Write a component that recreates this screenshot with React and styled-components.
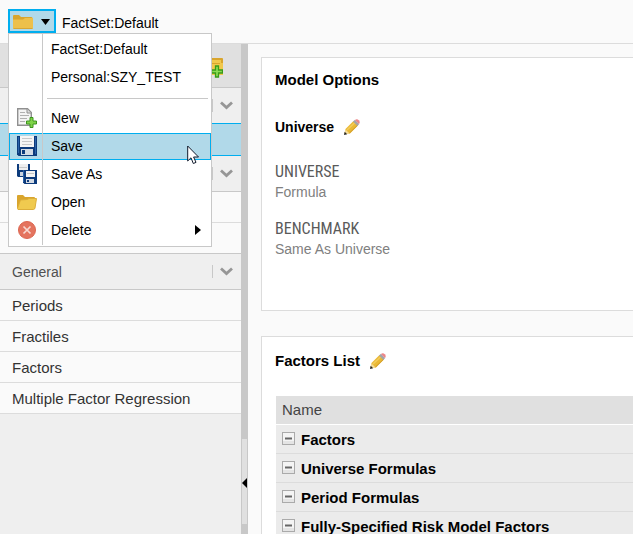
import { useState } from "react";
import styled, { createGlobalStyle } from "styled-components";

const GlobalStyle = createGlobalStyle`
  * {
    box-sizing: border-box;
  }

  body {
    margin: 0;
    background: #fafafa;
    color: #000;
    font-family: "Liberation Sans", Arial, sans-serif;
    font-size: 14px;
    line-height: 16px;
  }

  button {
    font: inherit;
    color: inherit;
    cursor: pointer;
  }

  svg {
    display: block;
    flex: none;
  }
`

const Page = styled.div`
  display: flex;
  flex-direction: column;
  height: 100vh;
  overflow: hidden;
`

const TopBar = styled.header`
  display: flex;
  align-items: center;
  flex: none;
  height: 44px;
  padding: 0 8px 2px;
  border-bottom: 1px solid #dcdcdc;
`

const CurrentProfile = styled.span`
  padding-top: 4px;
`

const MenuHolder = styled.div`
  position: relative;
  margin-right: 6px;
`

const MenuToggle = styled.button`
  display: flex;
  align-items: center;
  justify-content: space-between;
  width: 48px;
  height: 24px;
  padding: 2px 4px 0 3px;
  background: #b1d9e9;
  border: 2px solid #00aeef;
`

const Menu = styled.div`
  position: absolute;
  z-index: 5;
  top: 100%;
  left: 0;
  display: flex;
  flex-direction: column;
  gap: 1px;
  width: 204px;
  padding: 2px 0;
  background: #fff;
  border: 1px solid #c8c8c8;

  &::before {
    content: "";
    position: absolute;
    top: 0;
    bottom: 1px;
    left: 33px;
    width: 1px;
    background: #c8c8c8;
  }
`

const MenuItem = styled.button`
  display: flex;
  align-items: center;
  height: 27px;
  padding: 0 9px 0 7px;
  text-align: left;
  background: ${({ $active }) => ($active ? "#b1d9e9" : "transparent")};
  border: 1px solid ${({ $active }) => ($active ? "#00aeef" : "transparent")};
`

const MenuIcon = styled.span`
  display: flex;
  justify-content: center;
  width: 20px;
  margin-right: 14px;
`

const MenuLabel = styled.span`
  flex: 1;
`

const MenuDivider = styled.hr`
  width: 161px;
  height: 1px;
  margin: 6px 3px 5px auto;
  background: #c8c8c8;
  border: 0;
`

const Pointer = styled.span`
  position: absolute;
  z-index: 6;
  top: 136px;
  left: 179px;
  pointer-events: none;
`

const Body = styled.div`
  display: flex;
  flex: 1;
  min-height: 0;
`

const Sidebar = styled.nav`
  flex: none;
  width: 241px;
  background: #efefef;
`

const SideTools = styled.div`
  display: flex;
  align-items: center;
  justify-content: flex-end;
  height: 44px;
  padding: 4px 18px 0;
  background: #e0e0e0;
`

const SideHeader = styled.div`
  display: flex;
  align-items: center;
  justify-content: space-between;
  height: 37px;
  margin-top: -1px;
  padding: 0 8px 0 12px;
  color: #505050;
  background: #efefef;
  border: solid #c8c8c8;
  border-width: 1px 0;
`

const CollapseButton = styled.button`
  display: flex;
  margin-left: auto;
  padding: 2px 0 2px 7px;
  background: none;
  border: 0;
  border-left: 1px solid #c8c8c8;
`

const SideLink = styled.a`
  display: flex;
  align-items: center;
  height: ${({ $active }) => ($active ? "33px" : "31px")};
  margin-top: ${({ $active }) => ($active ? "-1px" : "0")};
  padding: 1px 12px 0;
  position: ${({ $active }) => ($active ? "relative" : "static")};
  font-size: 15px;
  color: #333;
  text-decoration: none;
  background: ${({ $active }) => ($active ? "#b1d9e9" : "#fafafa")};
  border-style: solid;
  border-color: ${({ $active }) => ($active ? "#00aeef" : "#dcdcdc")};
  border-width: ${({ $active }) => ($active ? "1px 0" : "0 0 1px")};
`

const Splitter = styled.div`
  display: flex;
  flex-direction: column;
  justify-content: flex-end;
  flex: none;
  width: 7px;
  padding: 0 1px 10px;
  background: #c8c8c8;
`

const SplitterHandle = styled.button`
  display: flex;
  align-items: center;
  justify-content: center;
  height: 85px;
  padding: 2px 0 0;
  background: #e0e0e0;
  border: 0;
`

const Content = styled.main`
  display: flex;
  flex-direction: column;
  flex: 1;
  gap: 25px;
  min-width: 0;
  padding: 13px 0 0 13px;
  overflow: hidden;
`

const Panel = styled.section`
  flex: none;
  min-height: 254px;
  padding: 13px 0 0 13px;
  background: #fff;
  border: 1px solid #dcdcdc;
  border-right: 0;
`

const PanelTitle = styled.h2`
  display: flex;
  align-items: center;
  min-height: 18px;
  margin: 0;
  font-size: 15px;
`

const SubTitle = styled.h3`
  display: flex;
  align-items: center;
  height: 18px;
  margin: 29px 0 24px;
  font-size: 14px;
`

const EditButton = styled.button`
  display: flex;
  margin-left: 10px;
  padding: 3px 0;
  background: none;
  border: 0;
`

const Options = styled.dl`
  margin: 0;
  color: #808080;

  dt {
    font-family: "Liberation Sans Narrow", "Roboto Condensed", "Open Sans Condensed", sans-serif;
    font-size: 16px;
    line-height: 24px;
    color: #5a5a5a;
  }

  dd {
    margin: 0 0 17px;
  }
`

const Table = styled.table`
  width: calc(100% - 1px);
  margin: 24px 0 0 1px;
  border-collapse: collapse;
  font-size: 15px;
  text-align: left;

  th {
    height: 28px;
    padding: 0 6px;
    font-weight: 400;
    color: #444;
    background: #e0e0e0;
    border-bottom: 1px solid #fff;
  }

  td {
    height: 29px;
    padding: 0 6px;
    font-weight: 700;
    background: #ebebeb;
    border-bottom: 1px solid #dcdcdc;
  }
`

const GroupCell = styled.div`
  display: flex;
  align-items: center;
  gap: 6px;
`

const GroupName = styled.span`
  padding-top: 2px;
`

const ToggleButton = styled.button`
  display: flex;
  padding: 0;
  background: none;
  border: 0;
`

const FolderIcon = () => (
  <svg width="20" height="15" viewBox="0 0 20 15">
    <path d="M0 2 Q0 1 1 1 H6 L8 3 H18 Q19.500 3 19.500 4 V14 H0Z" fill="#d9a52d" />
    <path d="M0 5.500 H10 L12 4 H20 V14 Q20 15 19 15 H1 Q0 15 0 14Z" fill="#edc04b" />
    <path d="M0.500 14.500 H19.500" stroke="#d8a634" />
  </svg>
)

const OpenFolderIcon = () => (
  <svg width="20" height="16" viewBox="0 0 20 16">
    <path d="M0 2 Q0 1 1 1 H6 L8 3 H17 Q18 3 18 4 V14 H0Z" fill="#d9a52d" />
    <path d="M3.500 6 L10 5.500 L12 4.500 H19.500 L18 14 Q17.500 15.500 16.500 15.500 H1 Q0.300 15 0.600 14Z" fill="#f0ca4f" stroke="#dcae3a" />
  </svg>
)

const AddFolderIcon = () => (
  <svg width="20" height="20" viewBox="0 0 20 20">
    <path d="M0 1 Q0 0 1 0 H19 Q20 0 20 1 V17 H0Z" fill="#d9a52d" />
    <path d="M1 2 H18 V5 H20 V17 H1Z" fill="#f1c84c" />
    <path d="M1 5.500 H17" stroke="#d9a52d" />
    <path d="M12.500 8 H15.500 V12 H19.500 V15 H15.500 V19 H12.500 V15 H8.500 V12 H12.500Z" fill="#8bdc54" stroke="#389b18" strokeWidth="1.300" />
  </svg>
)

const NewIcon = () => (
  <svg width="20" height="20" viewBox="0 0 20 20">
    <path d="M0.700 0.700 H10.500 L14.300 4.500 V17.300 H0.700Z" fill="#f4f4f4" stroke="#909090" strokeWidth="1.400" />
    <path d="M10 1 V5 H14" fill="#ddd" stroke="#909090" />
    <path d="M3 4.500 H8 M3 7.500 H12 M3 10.500 H10 M3 13.500 H8" stroke="#b0b0b0" />
    <path d="M13 9.500 H16 V13 H19.500 V16 H16 V19.500 H13 V16 H9.500 V13 H13Z" fill="#7ed348" stroke="#3c941e" />
  </svg>
)

const SaveIcon = () => (
  <svg width="20" height="20" viewBox="0 0 20 20">
    <path d="M0 0 H20 V20 H1.500 L0 18.500Z" fill="#0d3b7c" />
    <path d="M1.500 1 V17 M18.500 1 V18" stroke="#2a62a8" />
    <path d="M3 0 H17 V11 H3Z" fill="#f5f5f5" />
    <path d="M5 2.500 H15 M5 5.500 H15 M5 8.500 H15" stroke="#c8c8c8" />
    <path d="M4 13 H16 V19 H4Z" fill="#d3dae3" />
    <path d="M5 14 H8 V18 H5Z" fill="#0d3b7c" />
  </svg>
)

const SaveAsIcon = () => (
  <svg width="20" height="20" viewBox="0 0 20 20">
    <path d="M0 0 H13 V13 H1 L0 12Z" fill="#0d3b7c" />
    <path d="M2 0 H11 V6 H2Z" fill="#eee" />
    <path d="M2 3.500 H10" stroke="#c8c8c8" />
    <path d="M3 8 H7 V12 H3Z" fill="#cdd5df" />
    <path d="M6 6 H20 V20 H7.500 L6 18.500Z" fill="#0d3b7c" />
    <path d="M6.500 6 V18" stroke="#2a62a8" />
    <path d="M9 7 H18 V13 H9Z" fill="#f3f3f3" />
    <path d="M10 9.500 H17" stroke="#c4c4c4" />
    <path d="M9 15 H17 V19 H9Z" fill="#d3dae3" />
    <path d="M10 16 H12 V18 H10Z" fill="#0d3b7c" />
  </svg>
)

const DeleteIcon = () => (
  <svg width="18" height="18" viewBox="0 0 18 18">
    <circle cx="9" cy="9" r="8.500" fill="#e4745f" stroke="#dc6650" />
    <path d="M5.500 5.500 L12.500 12.500 M12.500 5.500 L5.500 12.500" stroke="#f8d9d2" strokeWidth="1.700" />
  </svg>
)

const PencilIcon = () => (
  <svg width="16" height="16" viewBox="0 0 16 16">
    <path d="M0.500 15 L1.500 10 L9.500 2 L14 6.500 L6 14.500Z" fill="#eab935" />
    <path d="M3 11 L11 3.500" stroke="#f3cc5c" strokeWidth="1.500" />
    <path d="M5.500 14 L13.500 6.300" stroke="#cf9a2b" />
    <path d="M0.500 15 L1.500 10.500 L5.500 14.500Z" fill="#f4dc9c" />
    <path d="M0 16 L0.700 12.800 L3.200 15.300Z" fill="#222" />
    <path d="M9 2.600 L11 0.800 L15.200 5 L13.400 7Z" fill="#a4a4a8" />
    <path d="M11 0.900 Q13 -0.500 14.800 1.200 Q16.500 3 15.100 5Z" fill="#ee8587" />
  </svg>
)

const ChevronIcon = () => (
  <svg width="13" height="9" viewBox="0 0 13 9">
    <path d="M1 1.500 L6.500 6.500 L12 1.500" fill="none" stroke="#969696" strokeWidth="2.800" />
  </svg>
)

const MinusIcon = () => (
  <svg width="13" height="13" viewBox="0 0 13 13">
    <rect x="0.500" y="0.500" width="12" height="12" fill="#f4f4f4" stroke="#aaa" />
    <path d="M1 9 H12 V12 H1Z" fill="#e4e4e4" />
    <path d="M3 6.500 H10" stroke="#666" strokeWidth="2" />
  </svg>
)

const ArrowIcon = ({ width, height, points }) => (
  <svg width={width} height={height} viewBox={`0 0 ${width} ${height}`}>
    <polygon points={points} fill="#000" />
  </svg>
)

const PointerIcon = () => (
  <svg width="13" height="20" viewBox="0 0 13 20">
    <path d="M0.700 1 V16 L4 12.800 L6.300 18.500 L9 17.400 L6.600 12 H11.500Z" fill="#fff" stroke="#111a2c" />
  </svg>
)

const profiles = ["FactSet:Default", "Personal:SZY_TEST"]

const actions = [
  { label: "New", Icon: NewIcon },
  { label: "Save", Icon: SaveIcon },
  { label: "Save As", Icon: SaveAsIcon },
  { label: "Open", Icon: OpenFolderIcon },
  { label: "Delete", Icon: DeleteIcon, submenu: true },
]

const links = ["Periods", "Fractiles", "Factors", "Multiple Factor Regression"]

const groups = ["Factors", "Universe Formulas", "Period Formulas", "Fully-Specified Risk Model Factors"]

const FileMenu = () => {

  const [open, setOpen] = useState(true)
  const [active, setActive] = useState("Save")

  return (
    <MenuHolder>
      <MenuToggle aria-label="File" aria-expanded={open} onClick={() => setOpen(open => !open)}>
        <FolderIcon />
        <ArrowIcon width={9} height={6} points="0,0 9,0 4.500,6" />
      </MenuToggle>
      {open ?
        <>
          <Menu role="menu">
            {profiles.map(name => (
              <MenuItem role="menuitem" key={name}>
                <MenuIcon />
                <MenuLabel>{name}</MenuLabel>
              </MenuItem>
            ))}
            <MenuDivider />
            {actions.map(({ label, Icon, submenu }) => (
              <MenuItem
                role="menuitem"
                key={label}
                $active={active === label}
                onMouseEnter={() => setActive(label)}>
                <MenuIcon><Icon /></MenuIcon>
                <MenuLabel>{label}</MenuLabel>
                {submenu ? <ArrowIcon width={6} height={10} points="0,0 6,5 0,10" /> : null}
              </MenuItem>
            ))}
          </Menu>
          <Pointer><PointerIcon /></Pointer>
        </>
        : null}
    </MenuHolder>
  )
}

const SectionHeader = ({ title }) => (
  <SideHeader>
    {title}
    <CollapseButton aria-label="Collapse"><ChevronIcon /></CollapseButton>
  </SideHeader>
)

const App = () => {
  return (
    <Page>
      <GlobalStyle />
      <TopBar>
        <FileMenu />
        <CurrentProfile>FactSet:Default</CurrentProfile>
      </TopBar>
      <Body>
        <Sidebar>
          <SideTools><AddFolderIcon /></SideTools>
          <SectionHeader />
          <SideLink href="#" $active />
          <SectionHeader />
          <SideLink href="#" />
          <SideLink href="#" />
          <SectionHeader title="General" />
          {links.map(link => <SideLink href="#" key={link}>{link}</SideLink>)}
        </Sidebar>
        <Splitter>
          <SplitterHandle aria-label="Collapse sidebar">
            <ArrowIcon width={5} height={10} points="5,0 0,5 5,10" />
          </SplitterHandle>
        </Splitter>
        <Content>
          <Panel>
            <PanelTitle>Model Options</PanelTitle>
            <SubTitle>
              Universe
              <EditButton aria-label="Edit universe"><PencilIcon /></EditButton>
            </SubTitle>
            <Options>
              <dt>UNIVERSE</dt>
              <dd>Formula</dd>
              <dt>BENCHMARK</dt>
              <dd>Same As Universe</dd>
            </Options>
          </Panel>
          <Panel>
            <PanelTitle>
              Factors List
              <EditButton aria-label="Edit factors"><PencilIcon /></EditButton>
            </PanelTitle>
            <Table>
              <thead>
                <tr><th>Name</th></tr>
              </thead>
              <tbody>
                {groups.map(group => (
                  <tr key={group}>
                    <td>
                      <GroupCell>
                        <ToggleButton aria-label="Collapse group"><MinusIcon /></ToggleButton>
                        <GroupName>{group}</GroupName>
                      </GroupCell>
                    </td>
                  </tr>
                ))}
              </tbody>
            </Table>
          </Panel>
        </Content>
      </Body>
    </Page>
  )
}

export default App
